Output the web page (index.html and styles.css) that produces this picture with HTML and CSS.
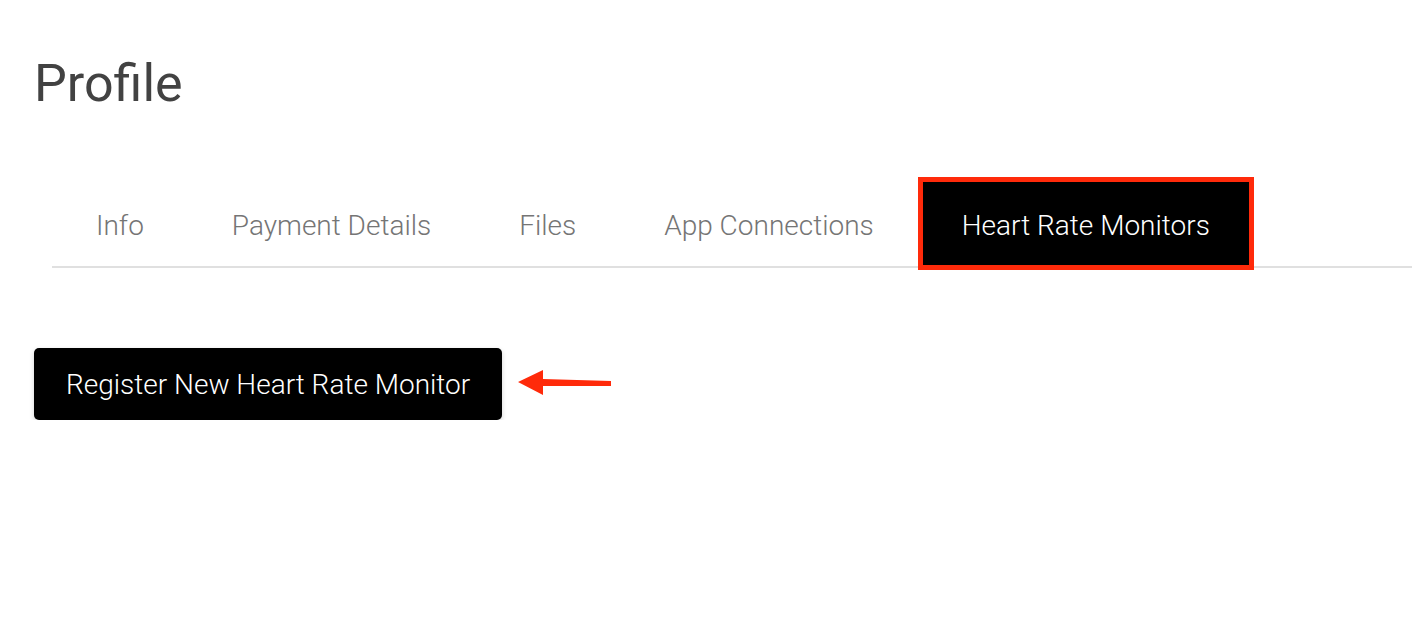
FILE: index.html
```html
<!DOCTYPE html>
<html lang="en">
<head>
<meta charset="utf-8">
<title>Profile</title>
<link rel="stylesheet" href="styles.css">
</head>
<body>
<main class="page">
  <h1 class="title">Profile</h1>
  <nav class="tabs">
    <a class="tab">Info</a>
    <a class="tab">Payment Details</a>
    <a class="tab">Files</a>
    <a class="tab">App Connections</a>
    <a class="tab tab-active">Heart Rate Monitors<span class="highlight"></span></a>
  </nav>
  <div class="actions">
    <button class="btn">Register New Heart Rate Monitor</button>
    <svg class="arrow" width="96" height="28" viewBox="0 0 96 28" aria-hidden="true">
      <polygon points="1,13 26,1 26,10 94,12 94,17 26,17 26,26" fill="#ff2a0a"/>
    </svg>
  </div>
</main>
</body>
</html>
```
FILE: styles.css
```css
html, body {
  margin: 0;
  padding: 0;
  background: #ffffff;
}
body {
  font-family: Roboto, "Liberation Sans", Arial, sans-serif;
}
.page {
  padding: 54px 0 0 34px;
}
.title {
  margin: 0;
  font-size: 52px;
  line-height: 60px;
  font-weight: 400;
  color: #424242;
}
.tabs {
  display: flex;
  margin: 63px 0 0 18px;
  border-bottom: 2px solid #e0e0e0;
}
.tab {
  position: relative;
  display: flex;
  align-items: center;
  height: 89px;
  padding: 7px 44px 0;
  box-sizing: border-box;
  font-size: 28px;
  font-weight: 300;
  color: #757575;
  cursor: pointer;
}
.tab-active {
  background: #000000;
  color: #ffffff;
}
.highlight {
  position: absolute;
  left: 0;
  top: 0;
  right: 0;
  bottom: -4px;
  border: 5px solid #ff2a0a;
  pointer-events: none;
}
.actions {
  display: flex;
  align-items: center;
  gap: 15px;
  margin-top: 80px;
}
.btn {
  height: 72px;
  padding: 0 32px;
  border: none;
  border-radius: 5px;
  background: #000000;
  color: #ffffff;
  font-family: Roboto, "Liberation Sans", Arial, sans-serif;
  font-size: 28px;
  font-weight: 300;
  box-shadow: 0 2px 5px rgba(0, 0, 0, 0.18);
  cursor: pointer;
}
.arrow {
  display: block;
  margin-top: -2px;
}
```
